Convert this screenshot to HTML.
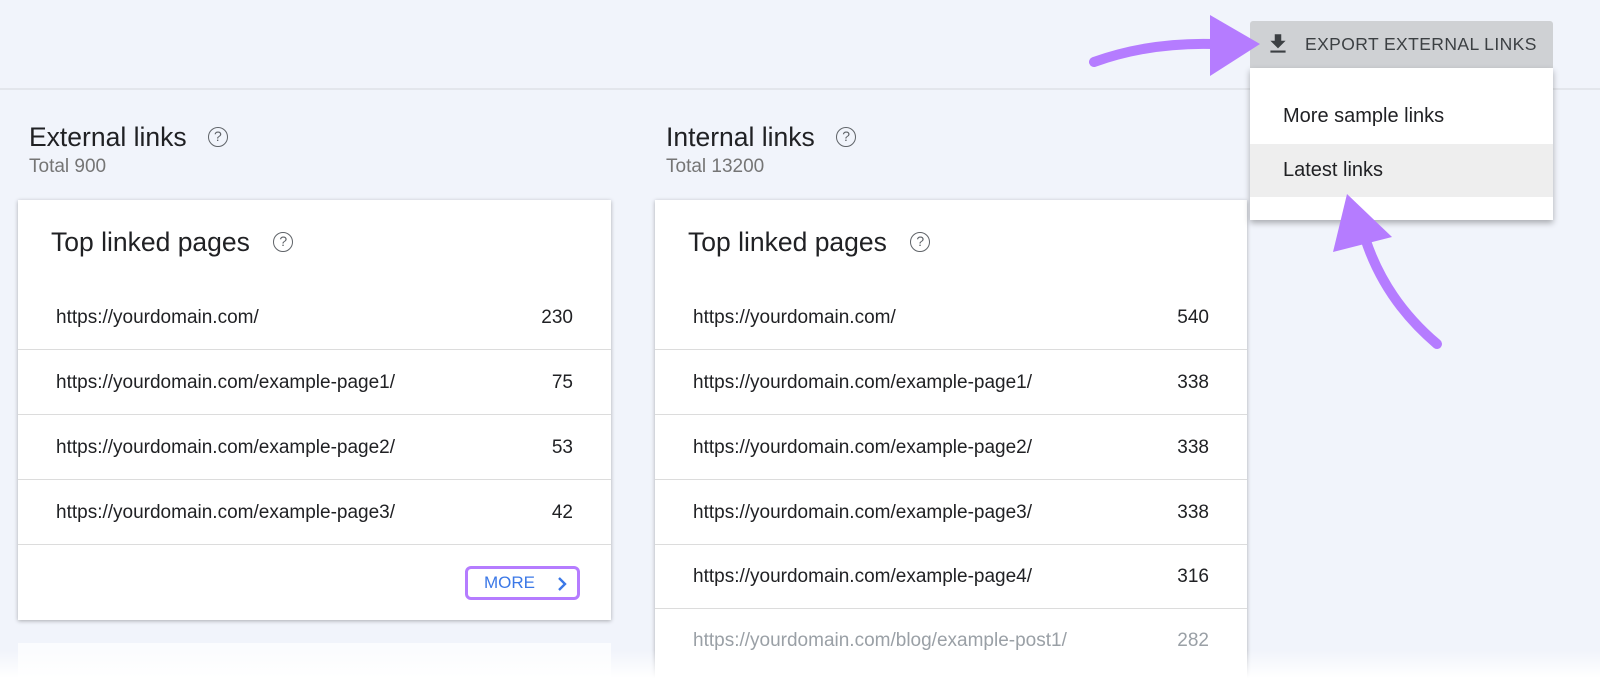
<!DOCTYPE html>
<html style="overflow:hidden"><head><style>
*{margin:0;padding:0;box-sizing:border-box}
html,body{width:1600px;height:678px;overflow:hidden}
body{background:#f1f4fb;font-family:"Liberation Sans",sans-serif;position:relative;color:#202124}
.hline{position:absolute;left:0;top:88px;width:1600px;height:2px;background:#e3e6ec}
.h1{position:absolute;font-size:26.5px;color:#202124}
.tot{position:absolute;font-size:19px;color:#757575}
.q{display:inline-block;width:20px;height:20px;border:1.6px solid #5f6368;border-radius:50%;font-size:14px;color:#5f6368;text-align:center;line-height:17px;vertical-align:middle;position:relative;top:-2px}
.card{position:absolute;background:#fff;box-shadow:0 1px 4px rgba(0,0,0,.3)}
.ct{position:absolute;left:33px;top:27px;font-size:26.5px;color:#202124}
.row{position:absolute;left:0;right:0;height:65px;border-bottom:1px solid #dcdcdc;font-size:19px;line-height:65px}
.row span.u{position:absolute;left:38px}
.row span.n{position:absolute;right:38px}
.btn{position:absolute;left:1250px;top:21px;width:303px;height:47px;background:#cfd1d4;border-radius:3px 3px 0 0;font-size:17.5px;color:#3c4043;letter-spacing:.4px;line-height:47px}
.menu{position:absolute;left:1250px;top:68px;width:303px;height:152px;background:#fff;box-shadow:0 3px 6px rgba(0,0,0,.3)}
.mi{position:absolute;left:0;width:303px;height:53px;line-height:53px;padding-left:33px;font-size:20px;color:#202124}
</style></head><body>
<div class="hline"></div>
<div class="h1" style="left:29px;top:122px">External links <span class="q" style="margin-left:14px">?</span></div>
<div class="tot" style="left:29px;top:156px">Total 900</div>
<div class="h1" style="left:666px;top:122px">Internal links <span class="q" style="margin-left:14px">?</span></div>
<div class="tot" style="left:666px;top:156px">Total 13200</div>

<div class="card" style="left:18px;top:200px;width:593px;height:420px">
<div class="ct">Top linked pages <span class="q" style="margin-left:16px">?</span></div>
<div class="row" style="top:85px"><span class="u">https://yourdomain.com/</span><span class="n">230</span></div>
<div class="row" style="top:150px"><span class="u">https://yourdomain.com/example-page1/</span><span class="n">75</span></div>
<div class="row" style="top:215px"><span class="u">https://yourdomain.com/example-page2/</span><span class="n">53</span></div>
<div class="row" style="top:280px"><span class="u">https://yourdomain.com/example-page3/</span><span class="n">42</span></div>
<div style="position:absolute;left:447px;top:366px;width:115px;height:34px;border:3px solid #b57cff;border-radius:6px;color:#3b78e7;font-size:17px;line-height:28px;padding-left:16px">MORE<svg style="position:absolute;right:10px;top:8px" width="10" height="14" viewBox="0 0 10 14"><path d="M2 1l6 6-6 6" stroke="#3b78e7" stroke-width="2.4" fill="none"/></svg></div>
</div>
<div class="card" style="left:18px;top:643px;width:593px;height:60px;box-shadow:none;opacity:.7"></div>

<div class="card" style="left:655px;top:200px;width:592px;height:500px">
<div class="ct">Top linked pages <span class="q" style="margin-left:16px">?</span></div>
<div class="row" style="top:85px"><span class="u">https://yourdomain.com/</span><span class="n">540</span></div>
<div class="row" style="top:150px"><span class="u">https://yourdomain.com/example-page1/</span><span class="n">338</span></div>
<div class="row" style="top:215px"><span class="u">https://yourdomain.com/example-page2/</span><span class="n">338</span></div>
<div class="row" style="top:280px"><span class="u">https://yourdomain.com/example-page3/</span><span class="n">338</span></div>
<div class="row" style="top:344px"><span class="u">https://yourdomain.com/example-page4/</span><span class="n">316</span></div>
<div class="row" style="top:408px;color:#9aa0a6;border:none"><span class="u">https://yourdomain.com/blog/example-post1/</span><span class="n">282</span></div>
</div>
<div style="position:absolute;left:0;top:650px;width:1600px;height:28px;background:linear-gradient(rgba(255,255,255,0),#fff)"></div>

<div class="btn"><svg style="position:absolute;left:15px;top:10px" width="26" height="26" viewBox="0 0 24 24"><path d="M19 9h-4V3H9v6H5l7 7 7-7zM5 18v2h14v-2H5z" fill="#3c4043"/></svg><span style="position:absolute;left:55px">EXPORT EXTERNAL LINKS</span></div>
<div class="menu">
<div class="mi" style="top:22px">More sample links</div>
<div class="mi" style="top:76px;background:#eeeeee">Latest links</div>
</div>

<svg style="position:absolute;left:0;top:0" width="1600" height="678">
<path d="M1094 62 Q1150 42 1215 44" stroke="#b57cff" stroke-width="10" fill="none" stroke-linecap="round"/>
<polygon points="1210,15 1260,44 1210,76" fill="#b57cff"/>
<path d="M1437 344 Q1385 300 1365 238" stroke="#b57cff" stroke-width="10" fill="none" stroke-linecap="round"/>
<polygon points="1347,194 1392,237 1333,252" fill="#b57cff"/>
</svg>
</body></html>
